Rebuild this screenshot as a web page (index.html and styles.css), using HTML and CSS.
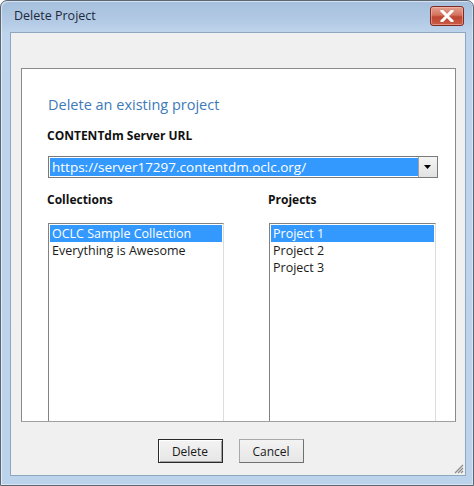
FILE: index.html
```html
<!DOCTYPE html>
<html>
<head>
<meta charset="utf-8">
<title>Delete Project</title>
<link rel="stylesheet" href="styles.css">
</head>
<body>
<div class="window">
  <div class="titlebar">
    <span class="title">Delete Project</span>
    <div class="close">
      <svg width="14" height="12" viewBox="0 0 14 12"><path d="M2 1 L12 11 M12 1 L2 11" stroke="#fff" stroke-width="3" stroke-linecap="square"/></svg>
    </div>
  </div>
  <div class="client">
    <div class="panel">
      <div class="heading">Delete an existing project</div>
      <div class="label">CONTENTdm Server URL</div>
      <div class="combo">
        <div class="combo-value">https://server17297.contentdm.oclc.org/</div>
        <div class="combo-btn"><svg width="8" height="5" viewBox="0 0 8 5"><path d="M0 0 H7 L3.5 4 Z" fill="#000"/></svg></div>
      </div>
      <div class="columns">
        <div class="col col-left">
          <div class="label">Collections</div>
          <div class="list">
            <div class="item selected">OCLC Sample Collection</div>
            <div class="item">Everything is Awesome</div>
          </div>
        </div>
        <div class="col col-right">
          <div class="label">Projects</div>
          <div class="list">
            <div class="item selected">Project 1</div>
            <div class="item">Project 2</div>
            <div class="item">Project 3</div>
          </div>
        </div>
      </div>
    </div>
    <div class="buttons">
      <div class="btn btn-default">Delete</div>
      <div class="btn">Cancel</div>
    </div>
    <svg class="grip" width="11" height="11" viewBox="0 0 11 11"><path d="M10 2 L2 10 M10 5 L5 10 M10 8 L8 10" stroke="#8a8a8a" stroke-width="1.2"/></svg>
  </div>
</div>
</body>
</html>
```

FILE: styles.css
```css
html, body {
  margin: 0;
  padding: 0;
  background: #ffffff;
}
body {
  font-family: "Open Sans", "Noto Sans", sans-serif;
  font-size: 12px;
  color: #1a1a1a;
}
.window {
  width: 474px;
  height: 486px;
  box-sizing: border-box;
  border: 1px solid #5c6670;
  border-radius: 7px 7px 0 0;
  background: linear-gradient(to bottom, #a5bfdc 0px, #b3cae6 20px, #bed4ec 32px, #bcd3ec 100%);
  padding: 0 7px 9px 9px;
  display: flex;
  flex-direction: column;
  box-shadow: inset 1px 1px 0 rgba(255,255,255,0.55), inset -1px -1px 0 rgba(255,255,255,0.4);
}
.titlebar {
  height: 31px;
  flex: none;
  display: flex;
  align-items: center;
  justify-content: space-between;
  padding: 0 2px 0 4px;
}
.title {
  font-size: 12.5px;
  color: #1c2a3a;
  margin-top: -2px;
}
.close {
  width: 34px;
  height: 20px;
  box-sizing: border-box;
  border: 1px solid #7c2a22;
  border-radius: 3px;
  background: linear-gradient(to bottom, #e2a090 0%, #d4735e 45%, #bd4530 55%, #c95c45 100%);
  display: flex;
  align-items: center;
  justify-content: center;
  margin-top: -2px;
  box-shadow: inset 0 0 0 1px rgba(255,200,190,0.5);
}
.client {
  flex: 1;
  position: relative;
  background: #f0f0f0;
  border: 1px solid #8ea6c0;
  display: flex;
  flex-direction: column;
}
.panel {
  height: 354px;
  box-sizing: border-box;
  margin: 35px 9px 0 10px;
  background: #ffffff;
  border: 1px solid #8a8a8a;
  border-bottom-color: #a0a0a0;
  padding: 25px 0 0 26px;
  display: flex;
  flex-direction: column;
  overflow: hidden;
}
.heading {
  font-size: 14.5px;
  line-height: 20px;
  color: #3d7ab8;
  margin-top: 1px;
  margin-bottom: -1px;
}
.label {
  font-weight: bold;
  font-size: 12px;
  line-height: 16px;
  color: #111;
  margin-left: -1px;
}
.panel > .label {
  margin-top: 14px;
}
.combo {
  margin-top: 12px;
  width: 390px;
  height: 22px;
  box-sizing: border-box;
  border: 1px solid #7a7a7a;
  display: flex;
  background: #fff;
}
.combo-value {
  flex: 1;
  margin: 1px 0 1px 1px;
  background: #3399ff;
  color: #fff;
  font-size: 13.5px;
  line-height: 18px;
  padding-left: 2px;
  white-space: nowrap;
  overflow: hidden;
}
.combo-btn {
  width: 19px;
  box-sizing: border-box;
  border-left: 1px solid #a0a0a0;
  background: linear-gradient(to bottom, #f4f4f4, #e2e2e2);
  display: flex;
  align-items: center;
  justify-content: center;
}
.columns {
  flex: 1;
  display: flex;
  gap: 45px;
  margin-top: 14px;
}
.col {
  display: flex;
  flex-direction: column;
}
.col-left { width: 176px; }
.col-right { width: 167px; }
.list {
  flex: 1;
  margin-top: 15px;
  border: 1px solid #828282;
  border-right-color: #dcdcdc;
  border-bottom: none;
  padding: 1px 1px 0 1px;
  background: #fff;
}
.item {
  height: 17px;
  line-height: 17px;
  padding-left: 2px;
  font-size: 12.5px;
  white-space: nowrap;
  color: #1a1a1a;
}
.item.selected {
  background: #3399ff;
  color: #fff;
}
.buttons {
  display: flex;
  justify-content: center;
  gap: 16px;
  margin-top: 17px;
  padding-right: 15px;
}
.btn {
  width: 65px;
  height: 24px;
  box-sizing: border-box;
  border: 1px solid #a8a8a8;
  border-right-color: #707070;
  border-bottom-color: #707070;
  background: linear-gradient(to bottom, #f3f3f3, #e6e6e6);
  display: flex;
  align-items: center;
  justify-content: center;
  color: #1a1a1a;
}
.btn-default {
  border: 1px solid #2a2a2a;
  box-shadow: inset 1px 1px 0 #ffffff, inset -1px -1px 0 #a0a0a0;
}
.grip {
  position: absolute;
  right: 1px;
  bottom: 1px;
}
```
